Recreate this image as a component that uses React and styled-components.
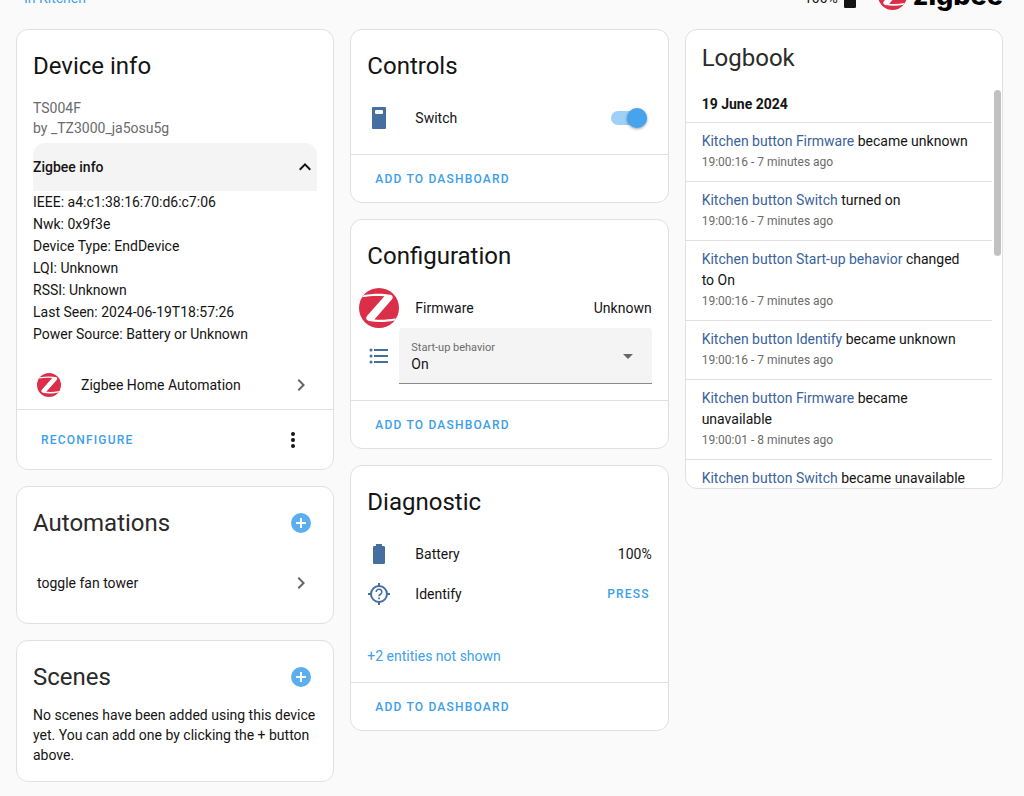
import React, { useState } from "react";
import styled, { createGlobalStyle } from "styled-components";

const ICONS = {
  battery:
    "M16.67,4H15V2H9V4H7.33A1.33,1.33 0 0,0 6,5.33V20.67C6,21.4 6.6,22 7.33,22H16.67A1.33,1.33 0 0,0 18,20.67V5.33C18,4.6 17.4,4 16.67,4Z",
  chevronRight: "M8.59,16.58L13.17,12L8.59,7.41L10,6L16,12L10,18L8.59,16.58Z",
  chevronUp: "M7.41,15.41L12,10.83L16.59,15.41L18,14L12,8L6,14L7.41,15.41Z",
  dots: "M12,16A2,2 0 0,1 14,18A2,2 0 0,1 12,20A2,2 0 0,1 10,18A2,2 0 0,1 12,16M12,10A2,2 0 0,1 14,12A2,2 0 0,1 12,14A2,2 0 0,1 10,12A2,2 0 0,1 12,10M12,4A2,2 0 0,1 14,6A2,2 0 0,1 12,8A2,2 0 0,1 10,6A2,2 0 0,1 12,4Z",
  plus: "M17,13H13V17H11V13H7V11H11V7H13V11H17M12,2A10,10 0 0,0 2,12A10,10 0 0,0 12,22A10,10 0 0,0 22,12A10,10 0 0,0 12,2Z",
  list: "M7,5H21V7H7V5M7,13V11H21V13H7M4,4.5A1.5,1.5 0 0,1 5.5,6A1.5,1.5 0 0,1 4,7.5A1.5,1.5 0 0,1 2.5,6A1.5,1.5 0 0,1 4,4.5M4,10.5A1.5,1.5 0 0,1 5.5,12A1.5,1.5 0 0,1 4,13.5A1.5,1.5 0 0,1 2.5,12A1.5,1.5 0 0,1 4,10.5M7,19V17H21V19H7M4,16.5A1.5,1.5 0 0,1 5.5,18A1.5,1.5 0 0,1 4,19.5A1.5,1.5 0 0,1 2.5,18A1.5,1.5 0 0,1 4,16.5Z",
  menuDown: "M7,10L12,15L17,10H7Z",
};

const info = [
  "IEEE: a4:c1:38:16:70:d6:c7:06",
  "Nwk: 0x9f3e",
  "Device Type: EndDevice",
  "LQI: Unknown",
  "RSSI: Unknown",
  "Last Seen: 2024-06-19T18:57:26",
  "Power Source: Battery or Unknown",
];

const logs = [
  ["Kitchen button Firmware", "became unknown", "19:00:16 - 7 minutes ago"],
  ["Kitchen button Switch", "turned on", "19:00:16 - 7 minutes ago"],
  ["Kitchen button Start-up behavior", "changed to On", "19:00:16 - 7 minutes ago"],
  ["Kitchen button Identify", "became unknown", "19:00:16 - 7 minutes ago"],
  ["Kitchen button Firmware", "became unavailable", "19:00:01 - 8 minutes ago"],
  ["Kitchen button Switch", "became unavailable", "19:00:01 - 8 minutes ago"],
];

function Icon({ name }) {
  return (
    <svg width="24" height="24" viewBox="0 0 24 24" fill="currentColor" aria-hidden="true">
      <path d={ICONS[name]} />
    </svg>
  );
}

function IdentifyIcon() {
  return (
    <svg width="24" height="24" viewBox="0 0 24 24" fill="none" stroke="currentColor" strokeWidth="2" aria-hidden="true">
      <circle cx="12" cy="12" r="8" />
      <path d="M12 1v3M12 20v3M1 12h3M20 12h3" />
      <path d="M9.200 10a2.800 2.700 0 1 1 4.500 2.100c-1 .7-1.700 1.100-1.700 2.200" strokeWidth="1.600" />
      <path d="M12 15.600v1.700" strokeWidth="1.800" />
    </svg>
  );
}

function ZigbeeIcon({ size }) {
  return (
    <svg width={size} height={size} viewBox="0 0 40 40" aria-hidden="true">
      <circle cx="20" cy="20" r="20" fill="#db2f49" />
      <path
        d="M4.600 7.200C14 5.200 24 5.200 31.600 6.800c2.400.8 2.800 3 1.200 4.800L15.400 31.400c7 .6 14 .2 21.600-1.200l-1.600 2.400c-8 1.800-17.400 2-25.400.4-3-.8-3.600-3.200-1.600-5.400L25.400 8.200C18 7.600 11 7.800 3.200 9.200Z"
        fill="#fff"
      />
    </svg>
  );
}

function CardActions() {
  return (
    <Actions>
      <TextButton>Add to dashboard</TextButton>
    </Actions>
  );
}

function App() {
  const [on, setOn] = useState(true);

  return (
    <>
      <GlobalStyle />
      <Header>
        <AreaLink href="#kitchen">In Kitchen</AreaLink>
        <Brand>
          <span>100%</span>
          <Icon name="battery" />
          <Logo>
            <ZigbeeIcon size={29} />
            <span>zigbee</span>
          </Logo>
        </Brand>
      </Header>
      <Page>
        <Column>
          <Card>
            <Title>Device info</Title>
            <Model>
              TS004F
              <br />
              by _TZ3000_ja5osu5g
            </Model>
            <Expander aria-expanded="true">
              Zigbee info
              <Icon name="chevronUp" />
            </Expander>
            <InfoList>
              {info.map((line) => (
                <li key={line}>{line}</li>
              ))}
            </InfoList>
            <LinkRow href="#zha">
              <ZigbeeIcon size={24} />
              <span>Zigbee Home Automation</span>
              <Icon name="chevronRight" />
            </LinkRow>
            <Actions $tall>
              <TextButton>Reconfigure</TextButton>
              <IconButton aria-label="More options">
                <Icon name="dots" />
              </IconButton>
            </Actions>
          </Card>

          <Card>
            <TitleBar>
              <Title>Automations</Title>
              <IconButton $accent aria-label="Add automation">
                <Icon name="plus" />
              </IconButton>
            </TitleBar>
            <AutomationRow href="#automation">
              <span>toggle fan tower</span>
              <Icon name="chevronRight" />
            </AutomationRow>
          </Card>

          <Card>
            <TitleBar>
              <Title>Scenes</Title>
              <IconButton $accent aria-label="Add scene">
                <Icon name="plus" />
              </IconButton>
            </TitleBar>
            <Note>
              No scenes have been added using this device yet. You can add one by
              clicking the + button above.
            </Note>
          </Card>
        </Column>

        <Column>
          <Card>
            <Title>Controls</Title>
            <Entities>
              <Entity>
                <Badge>
                  <svg width="24" height="24" viewBox="0 0 24 24" fill="currentColor" aria-hidden="true">
                    <path
                      fillRule="evenodd"
                      d="M6 1H18A1 1 0 0 1 19 2V22A1 1 0 0 1 18 23H6A1 1 0 0 1 5 22V2A1 1 0 0 1 6 1ZM9 4A1 1 0 0 0 8 5V7A1 1 0 0 0 9 8H15A1 1 0 0 0 16 7V5A1 1 0 0 0 15 4Z"
                    />
                  </svg>
                </Badge>
                <label htmlFor="switch">Switch</label>
                <Toggle
                  id="switch"
                  type="checkbox"
                  checked={on}
                  onChange={(e) => setOn(e.target.checked)}
                />
              </Entity>
            </Entities>
            <CardActions />
          </Card>

          <Card>
            <Title>Configuration</Title>
            <Entities>
              <Entity>
                <Badge>
                  <ZigbeeIcon size={40} />
                </Badge>
                <span>Firmware</span>
                <span>Unknown</span>
              </Entity>
              <SelectRow>
                <Badge>
                  <Icon name="list" />
                </Badge>
                <SelectField>
                  <label htmlFor="startup">Start-up behavior</label>
                  <select id="startup" defaultValue="On">
                    <option>On</option>
                    <option>Off</option>
                  </select>
                  <Icon name="menuDown" />
                </SelectField>
              </SelectRow>
            </Entities>
            <CardActions />
          </Card>

          <Card>
            <Title>Diagnostic</Title>
            <Entities>
              <Entity>
                <Badge>
                  <Icon name="battery" />
                </Badge>
                <span>Battery</span>
                <span>100%</span>
              </Entity>
              <Entity>
                <Badge>
                  <IdentifyIcon />
                </Badge>
                <span>Identify</span>
                <TextButton $press>Press</TextButton>
              </Entity>
              <MoreButton>+2 entities not shown</MoreButton>
            </Entities>
            <CardActions />
          </Card>
        </Column>

        <Column>
          <Logbook>
            <LogTitle>Logbook</LogTitle>
            <LogBody>
              <LogList>
                <h3>19 June 2024</h3>
                {logs.map(([entity, text, time]) => (
                  <LogEntry key={entity + time}>
                    <p>
                      <a href="#entity">{entity}</a> {text}
                    </p>
                    <time>{time}</time>
                  </LogEntry>
                ))}
              </LogList>
              <ScrollThumb />
            </LogBody>
          </Logbook>
        </Column>
      </Page>
    </>
  );
}

const GlobalStyle = createGlobalStyle`
  * {
    box-sizing: border-box;
  }
  body {
    margin: 0;
    background: #fafafa;
    color: #141414;
    font-family: Roboto, "Liberation Sans", sans-serif;
    font-size: 14px;
    line-height: 20px;
    -webkit-font-smoothing: antialiased;
  }
  button, select {
    font: inherit;
    color: inherit;
    border: none;
    background: none;
    padding: 0;
    cursor: pointer;
  }
  a {
    text-decoration: none;
  }
  h2, h3, p, ul {
    margin: 0;
    padding: 0;
  }
  svg {
    display: block;
    flex: none;
  }
`;

/* the bar is scrolled, only its lower edge is in view */
const Header = styled.header`
  display: flex;
  justify-content: space-between;
  align-items: flex-end;
  height: 29px;
  padding: 0 21px 19px 24px;
  overflow: hidden;
  line-height: 24px;
`;

const AreaLink = styled.a`
  color: #42a0ea;
`;

const Brand = styled.div`
  display: flex;
  align-items: flex-end;
`;

const Logo = styled.div`
  display: flex;
  align-items: center;
  gap: 6px;
  margin-left: 16px;
  color: #000;
  font-family: Inter, sans-serif;
  font-size: 27px;
  font-weight: 800;
`;

const Page = styled.main`
  display: grid;
  grid-template-columns: repeat(3, minmax(0, 1fr));
  align-items: start;
  gap: 16px;
  padding: 0 21px 12px 16px;
`;

const Column = styled.div`
  display: flex;
  flex-direction: column;
  gap: 16px;
`;

const Card = styled.section`
  background: #fff;
  border: 1px solid #e0e0e0;
  border-radius: 12px;
  padding-top: 12px;
  overflow: hidden;
`;

const Title = styled.h2`
  padding: 0 16px;
  font-size: 24px;
  font-weight: 400;
  line-height: 48px;
`;

const TitleBar = styled.div`
  display: flex;
  align-items: center;
  justify-content: space-between;
  padding-right: 20px;
  color: #2a2a2a;
`;

const Model = styled.p`
  padding: 8px 16px 5px;
  color: #6b6b6b;
`;

const Expander = styled.button`
  display: flex;
  align-items: center;
  justify-content: space-between;
  width: calc(100% - 32px);
  height: 48px;
  margin: 0 16px;
  background: #f4f4f4;
  border-radius: 12px 12px 0 0;
  font-weight: 500;
`;

const InfoList = styled.ul`
  padding: 0 16px;
  list-style: none;
  line-height: 22px;
`;

const LinkRow = styled.a`
  display: flex;
  align-items: center;
  gap: 20px;
  height: 48px;
  margin-top: 16px;
  padding: 0 20px;
  color: inherit;
  span {
    flex: 1;
  }
  svg:last-child {
    color: #666;
  }
`;

const AutomationRow = styled(LinkRow)`
  margin: 12px 0 16px;
`;

const Actions = styled.div`
  display: flex;
  align-items: center;
  justify-content: space-between;
  height: ${({ $tall }) => ($tall ? 60 : 48)}px;
  padding: 0 28px 0 24px;
  border-top: 1px solid #e0e0e0;
`;

const TextButton = styled.button`
  color: #3d9eea;
  font-size: 12px;
  font-weight: 500;
  letter-spacing: 0.1em;
  text-transform: uppercase;
  margin-right: ${({ $press }) => ($press ? 2 : 0)}px;
`;

const IconButton = styled.button`
  color: ${({ $accent }) => ($accent ? "#5baeef" : "#141414")};
`;

const Note = styled.p`
  padding: 4px 16px 16px;
`;

const Entities = styled.div`
  padding: 8px 16px 16px 8px;
`;

const Entity = styled.div`
  display: flex;
  align-items: center;
  gap: 16px;
  height: 40px;
  > :nth-child(2) {
    flex: 1;
  }
`;

const SelectRow = styled.div`
  display: flex;
  align-items: center;
`;

const Badge = styled.div`
  display: grid;
  place-items: center;
  width: 40px;
  height: 40px;
  color: #446f9f;
`;

const Toggle = styled.input`
  appearance: none;
  display: flex;
  align-items: center;
  justify-content: ${({ checked }) => (checked ? "flex-end" : "flex-start")};
  width: 36px;
  height: 14px;
  margin: 0 5px 0 0;
  border-radius: 7px;
  background: #9fd0f8;
  cursor: pointer;
  &::after {
    content: "";
    width: 20px;
    height: 20px;
    flex: none;
    border-radius: 50%;
    background: #48a3ed;
    box-shadow: 0 1px 3px rgba(0, 0, 0, 0.4);
  }
`;

const SelectField = styled.div`
  flex: 1;
  display: grid;
  grid-template-columns: 1fr 24px;
  align-items: center;
  height: 56px;
  padding: 12px 12px 11px;
  background: #f4f4f4;
  border-bottom: 1px solid #8a8a8a;
  border-radius: 4px 4px 0 0;
  line-height: 16px;
  label {
    grid-column: 1;
    grid-row: 1;
    color: #6b6b6b;
    font-size: 11px;
  }
  select {
    grid-column: 1;
    grid-row: 2;
    height: 16px;
    appearance: none;
  }
  svg {
    grid-column: 2;
    grid-row: 1 / 3;
    color: #666;
  }
`;

const MoreButton = styled.button`
  display: block;
  margin: 32px 8px 0;
  color: #42a0ea;
`;

const Logbook = styled(Card)`
  height: 460px;
  padding-top: 4px;
`;

const LogTitle = styled(Title)`
  padding-bottom: 8px;
  color: #2a2a2a;
`;

const LogBody = styled.div`
  display: flex;
  justify-content: space-between;
`;

const LogList = styled.div`
  flex: 1;
  margin-right: 2px;
  h3 {
    padding: 4px 16px 8px;
    font-size: 14px;
    font-weight: 700;
    line-height: 20px;
  }
`;

const LogEntry = styled.div`
  padding: 8px 20px 8px 16px;
  border-top: 1px solid #e0e0e0;
  line-height: 21px;
  a {
    color: #3a639b;
  }
  time {
    display: block;
    color: #6b6b6b;
    font-size: 12px;
  }
`;

const ScrollThumb = styled.div`
  width: 7px;
  height: 166px;
  margin-right: 1px;
  border-radius: 4px;
  background: #c1c1c1;
`;

export default App;
